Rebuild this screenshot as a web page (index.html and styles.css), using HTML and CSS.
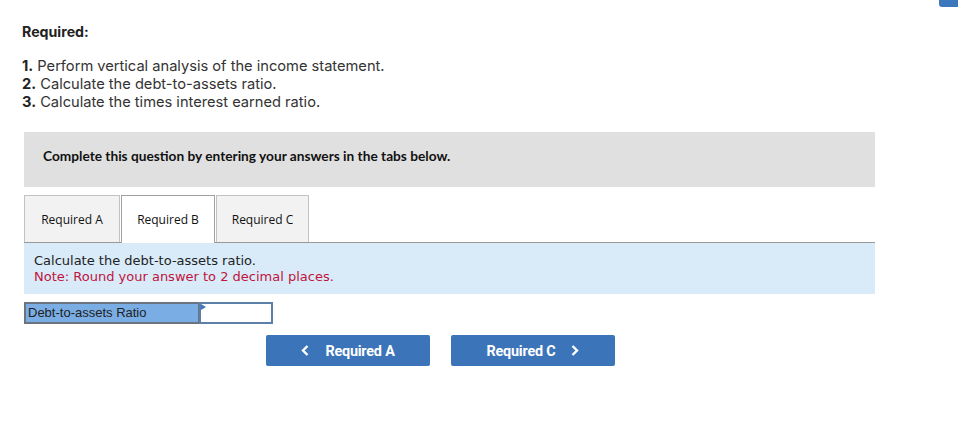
FILE: index.html
```html
<!DOCTYPE html>
<html>
<head>
<meta charset="utf-8">
<link rel="stylesheet" href="styles.css">
</head>
<body>
<div class="corner-tab"></div>
<div class="page">
  <div class="req-title">Required:</div>
  <ol class="req-list">
    <li><b>1.</b> Perform vertical analysis of the income statement.</li>
    <li><b>2.</b> Calculate the debt-to-assets ratio.</li>
    <li><b>3.</b> Calculate the times interest earned ratio.</li>
  </ol>
  <div class="instruct">Complete this question by entering your answers in the tabs below.</div>
  <div class="tabs">
    <div class="tab tab-a">Required A</div>
    <div class="tab tab-b active">Required B</div>
    <div class="tab tab-c">Required C</div>
  </div>
  <div class="panel">
    <div class="panel-line">Calculate the debt-to-assets ratio.</div>
    <div class="panel-line note">Note: Round your answer to 2 decimal places.</div>
  </div>
  <div class="answer-row">
    <div class="answer-label">Debt-to-assets Ratio</div>
    <div class="answer-input"><span class="marker"></span></div>
  </div>
  <div class="nav">
    <button class="nav-btn">
      <svg class="chev" width="8" height="11" viewBox="0 0 8 11"><polyline points="6.5,1 2,5.5 6.5,10" fill="none" stroke="#fff" stroke-width="2.4"/></svg>
      <span>Required A</span>
    </button>
    <button class="nav-btn next">
      <span>Required C</span>
      <svg class="chev" width="8" height="11" viewBox="0 0 8 11"><polyline points="1.5,1 6,5.5 1.5,10" fill="none" stroke="#fff" stroke-width="2.4"/></svg>
    </button>
  </div>
</div>
</body>
</html>
```
FILE: styles.css
```css
html, body {
  margin: 0;
  padding: 0;
  background: #fff;
}
.corner-tab {
  position: absolute;
  top: 0;
  right: 0;
  width: 19px;
  height: 7px;
  background: #3d78bd;
  border-bottom-left-radius: 3px;
}
.page {
  padding: 23px 0 0 22px;
  width: 853px;
  font-family: Inter, "Open Sans", sans-serif;
  color: #222;
}
.req-title {
  font-weight: bold;
  font-size: 14.2px;
  line-height: 18px;
  color: #222;
}
.req-list {
  list-style: none;
  margin: 16px 0 0 0;
  padding: 0;
  font-size: 14.65px;
  line-height: 18px;
  color: #333;
}
.req-list b {
  color: #222;
}
.instruct {
  margin: 21px 0 0 2px;
  height: 55px;
  box-sizing: border-box;
  background: #e0e0e0;
  padding: 15px 0 0 19px;
  line-height: 18px;
  font-family: Lato, "Liberation Sans", sans-serif;
  font-weight: bold;
  font-size: 13.7px;
  color: #111;
}
.tabs {
  margin: 8px 0 0 2px;
  display: flex;
  gap: 1px;
  border-bottom: 1px solid #999;
  height: 47px;
}
.tab {
  box-sizing: border-box;
  height: 47px;
  border: 1px solid #c2c2c2;
  border-bottom: none;
  background: #f2f2f2;
  display: flex;
  align-items: center;
  justify-content: center;
  font-family: "Open Sans", "Liberation Sans", sans-serif;
  font-size: 12px;
  color: #111;
}
.tab-a { width: 96px; }
.tab-b { width: 94px; }
.tab-c { width: 93px; }
.tab.active {
  background: #fff;
  border-color: #a0a0a0;
  height: 48px;
  margin-bottom: -1px;
}
.panel {
  margin-left: 2px;
  background: #d9ebf9;
  padding: 10px 10px 9px 10px;
  font-family: "DejaVu Sans", Verdana, sans-serif;
  font-size: 13px;
  line-height: 16px;
  color: #222;
}
.note {
  color: #c0143c;
}
.answer-row {
  margin: 8px 0 0 2px;
  display: flex;
  height: 22px;
}
.answer-label {
  box-sizing: border-box;
  width: 175px;
  height: 22px;
  background: #79ade4;
  border: 2px solid #6b7280;
  border-right: 1px solid #6b7280;
  padding-left: 2px;
  font-family: "Liberation Sans", Arial, sans-serif;
  font-size: 13px;
  line-height: 18px;
  color: #222;
}
.answer-input {
  position: relative;
  box-sizing: border-box;
  width: 74px;
  height: 22px;
  background: #fff;
  border: 2px solid #5c7fa8;
}
.marker {
  position: absolute;
  top: 0;
  left: 0;
  width: 0;
  height: 0;
  border-top: 3px solid transparent;
  border-bottom: 3px solid transparent;
  border-left: 5px solid #3d78bd;
}
.nav {
  margin-top: 11px;
  display: flex;
  gap: 21px;
  padding-left: 244px;
}
.nav-btn {
  width: 164px;
  height: 31px;
  border: none;
  border-radius: 2px;
  background: #3b74b8;
  color: #fff;
  font-family: Roboto, "Liberation Sans", sans-serif;
  font-weight: bold;
  font-size: 14.4px;
  display: flex;
  align-items: center;
  justify-content: center;
  gap: 16px;
  padding: 0 0 0 0;
  letter-spacing: -0.2px;
}
.nav-btn span {
  position: relative;
  top: 1px;
}
.chev {
  display: block;
}
```
